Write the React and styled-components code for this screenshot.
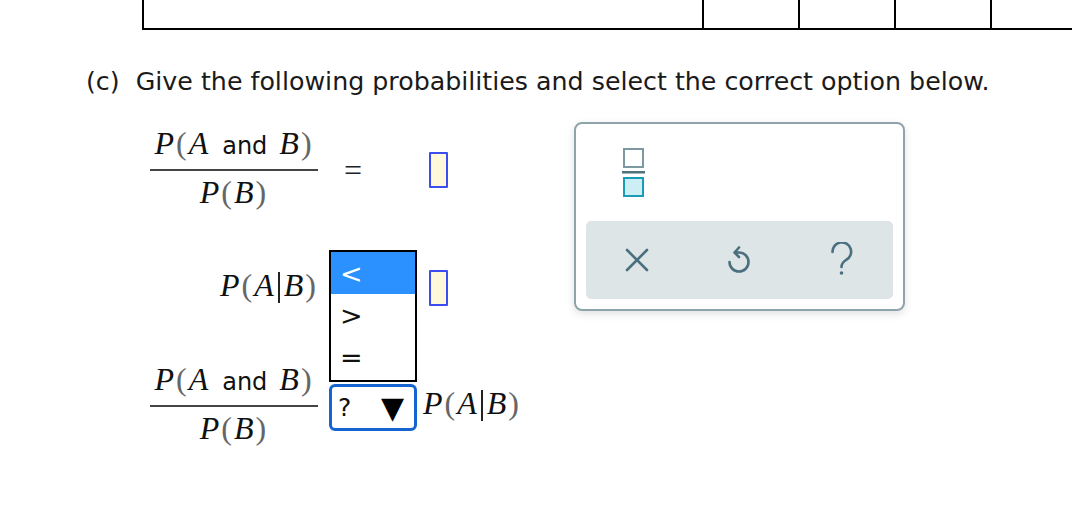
import React from 'react';
import styled, { createGlobalStyle } from 'styled-components';

const GlobalStyle = createGlobalStyle`
  body {
    margin: 0;
    background: #fff;
    font-family: "DejaVu Sans", Verdana, sans-serif;
    color: #111;
  }
`;

const Page = styled.div`
  width: 1072px;
  height: 530px;
  overflow: hidden;
  position: relative;
`;

const TableEdge = styled.div`
  display: flex;
  margin-left: 142px;
  height: 28px;
  border-left: 2px solid #000;
  border-bottom: 2px solid #000;
`;

const Cell = styled.div`
  flex: none;
  width: ${(p) => p.$w}px;
  border-left: ${(p) => (p.$first ? 'none' : '2px solid #000')};
`;

const Section = styled.div`
  padding-left: 86px;
  margin-top: 37px;
`;

const Heading = styled.p`
  margin: 0;
  font-size: 25.3px;
  line-height: 30px;
  color: #1a1a1a;
  white-space: pre;
`;

const Body = styled.div`
  display: flex;
  align-items: flex-start;
  padding-left: 62px;
  margin-top: 14px;
`;

const MathColumn = styled.div`
  width: 426px;
  flex: none;
`;

const Row = styled.div`
  display: flex;
  align-items: center;
  height: 118px;
`;

const Lhs = styled.div`
  width: 170px;
  display: flex;
  justify-content: flex-end;
`;

const Middle = styled.div`
  position: relative;
  width: 88px;
  height: 47px;
  margin-left: 11px;
  display: flex;
  align-items: center;
  margin-top: ${(p) => p.$shift || 0}px;
`;

const Equals = styled.span`
  font-family: "Liberation Serif", serif;
  font-size: 32px;
  padding-left: 15px;
  color: #222;
`;

const Fraction = styled.div`
  width: 168px;
  display: flex;
  flex-direction: column;
  align-items: center;
`;

const Numerator = styled.div`
  width: 100%;
  text-align: center;
  line-height: 34px;
  padding-bottom: 3px;
  border-bottom: 2px solid #444;
  white-space: nowrap;
`;

const Denominator = styled.div`
  line-height: 34px;
  padding-top: 4px;
  white-space: nowrap;
`;

const Expr = styled.span`
  line-height: 34px;
  white-space: nowrap;
  margin-left: ${(p) => p.$ml || 0}px;
`;

const V = styled.span`
  font-family: "Liberation Serif", serif;
  font-style: italic;
  font-size: 32px;
  color: #111;
`;

const Paren = styled.span`
  font-family: "Liberation Serif", serif;
  font-size: 32px;
  color: #666;
  margin: 0 2px;
`;

const Word = styled.span`
  font-family: "DejaVu Sans", sans-serif;
  font-size: 24px;
  margin: 0 12px 0 14px;
  color: #111;
`;

const Given = styled.span`
  display: inline-block;
  width: 2px;
  height: 31px;
  background: #222;
  vertical-align: -7px;
  margin: 0 4px 0 4px;
`;

const AnswerBox = styled.div`
  width: 15px;
  height: 32px;
  margin-left: 12px;
  background: #fff9d9;
  border: 2px solid #3c4ef0;
  border-radius: 1px;
`;

const Select = styled.div`
  box-sizing: border-box;
  width: 88px;
  height: 47px;
  border: 3px solid #1565d0;
  border-radius: 6px;
  display: flex;
  align-items: center;
  justify-content: space-between;
  padding: 0 10px 0 6px;
  font-size: 25px;
`;

const Caret = styled.span`
  font-size: 30px;
  line-height: 30px;
  color: #000;
`;

const OptionList = styled.div`
  position: absolute;
  left: 0;
  bottom: calc(100% + 2px);
  box-sizing: border-box;
  width: 88px;
  height: 132px;
  border: 2px solid #000;
  background: #fff;
  display: flex;
  flex-direction: column;
  z-index: 2;
`;

const Option = styled.div`
  height: 42px;
  display: flex;
  align-items: center;
  padding-left: 9px;
  font-size: 27px;
  background: ${(p) => (p.$active ? '#2b91ff' : '#fff')};
  color: ${(p) => (p.$active ? '#fff' : '#111')};
`;

const Panel = styled.div`
  box-sizing: border-box;
  width: 331px;
  height: 189px;
  margin-top: 11px;
  border: 2px solid #8fa3ab;
  border-radius: 8px;
  box-shadow: 0 3px 8px rgba(0, 0, 0, 0.12);
  padding: 24px 10px 10px;
  display: flex;
  flex-direction: column;
  justify-content: space-between;
`;

const Palette = styled.div`
  display: grid;
  grid-template-columns: repeat(3, 1fr);
`;

const PaletteButton = styled.div`
  display: flex;
  justify-content: center;
  padding-right: 6px;
`;

const Toolbar = styled.div`
  height: 78px;
  background: #dee5e7;
  border-radius: 5px;
  display: grid;
  grid-template-columns: repeat(3, 1fr);
  align-items: center;
  justify-items: center;
`;

const ToolButton = styled.div`
  display: flex;
  align-items: center;
  justify-content: center;
  margin-top: ${(p) => p.$mt || 0}px;
`;

function FractionIcon() {
  return (
    <svg width="24" height="50" viewBox="0 0 24 50">
      <rect x="2" y="1" width="19" height="18" fill="#fff" stroke="#7e98a1" strokeWidth="2" />
      <rect x="0" y="23" width="23" height="2.5" fill="#52717e" />
      <rect x="2" y="30" width="19" height="18" fill="#cdeef5" stroke="#1b9cb6" strokeWidth="2" />
    </svg>
  );
}

function CloseIcon() {
  return (
    <svg width="24" height="24" viewBox="0 0 24 24">
      <path d="M2 2 L22 22 M22 2 L2 22" stroke="#4a6f7e" strokeWidth="2.6" strokeLinecap="round" fill="none" />
    </svg>
  );
}

function UndoIcon() {
  return (
    <svg width="26" height="28" viewBox="0 0 26 28">
      <path
        d="M3.5 16 A9.5 9.5 0 1 0 13 6.5 H9.5 M13 1.5 L8.5 6.5 L13 11"
        stroke="#4a6f7e"
        strokeWidth="2.6"
        strokeLinecap="round"
        strokeLinejoin="round"
        fill="none"
      />
    </svg>
  );
}

function HelpIcon() {
  return (
    <svg width="24" height="34" viewBox="0 0 24 34">
      <path
        d="M2.5 10 A9.3 9.3 0 1 1 16 18 C13 20 11.5 21.5 11.5 25"
        stroke="#4a6f7e"
        strokeWidth="2.6"
        strokeLinecap="round"
        fill="none"
      />
      <circle cx="11.5" cy="31" r="1.8" fill="#4a6f7e" />
    </svg>
  );
}

function PandB() {
  return (
    <>
      <V>P</V>
      <Paren>(</Paren>
      <V>A</V>
      <Word>and</Word>
      <V>B</V>
      <Paren>)</Paren>
    </>
  );
}

function PofB() {
  return (
    <>
      <V>P</V>
      <Paren>(</Paren>
      <V>B</V>
      <Paren>)</Paren>
    </>
  );
}

function PAgivenB() {
  return (
    <>
      <V>P</V>
      <Paren>(</Paren>
      <V>A</V>
      <Given />
      <V>B</V>
      <Paren>)</Paren>
    </>
  );
}

function Ratio() {
  return (
    <Fraction>
      <Numerator>
        <PandB />
      </Numerator>
      <Denominator>
        <PofB />
      </Denominator>
    </Fraction>
  );
}

export default function App() {
  const options = ['<', '>', '='];
  return (
    <Page>
      <GlobalStyle />
      <TableEdge>
        <Cell $first $w={558} />
        <Cell $w={94} />
        <Cell $w={94} />
        <Cell $w={94} />
        <Cell $w={200} />
      </TableEdge>
      <Section>
        <Heading>(c)  Give the following probabilities and select the correct option below.</Heading>
        <Body>
          <MathColumn>
            <Row>
              <Lhs>
                <Ratio />
              </Lhs>
              <Middle>
                <Equals>=</Equals>
              </Middle>
              <AnswerBox />
            </Row>
            <Row>
              <Lhs>
                <Expr>
                  <PAgivenB />
                </Expr>
              </Lhs>
              <Middle />
              <AnswerBox />
            </Row>
            <Row>
              <Lhs>
                <Ratio />
              </Lhs>
              <Middle $shift={3}>
                <OptionList>
                  {options.map((o, i) => (
                    <Option key={o} $active={i === 0}>
                      {o}
                    </Option>
                  ))}
                </OptionList>
                <Select>
                  <span>?</span>
                  <Caret>▼</Caret>
                </Select>
              </Middle>
              <Expr $ml={6}>
                <PAgivenB />
              </Expr>
            </Row>
          </MathColumn>
          <Panel>
            <Palette>
              <PaletteButton>
                <FractionIcon />
              </PaletteButton>
            </Palette>
            <Toolbar>
              <ToolButton>
                <CloseIcon />
              </ToolButton>
              <ToolButton>
                <UndoIcon />
              </ToolButton>
              <ToolButton $mt={-2}>
                <HelpIcon />
              </ToolButton>
            </Toolbar>
          </Panel>
        </Body>
      </Section>
    </Page>
  );
}
